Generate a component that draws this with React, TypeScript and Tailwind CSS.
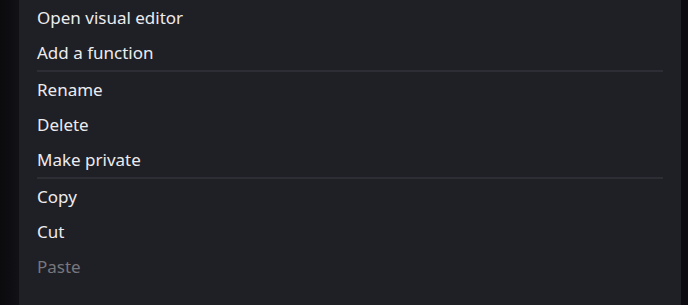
const groups = [
  ['Open visual editor', 'Add a function'],
  ['Rename', 'Delete', 'Make private'],
  ['Copy', 'Cut', 'Paste'],
];

export default function App() {
  return (
    <div className="flex h-[305px] w-[688px] overflow-hidden bg-[#0c0c10]" style={{ fontFamily: '"Noto Sans", sans-serif' }}>
      <div className="w-[19px] shrink-0 bg-gradient-to-r from-[#0b0b0e] to-[#111116]" />
      <div className="flex w-[662px] flex-col bg-[#1f1f26] pl-[18px] pr-[18px]">
        {groups.map((group, gi) => (
          <div key={gi}>
            {gi > 0 && <div className="h-[2px] bg-[#2d2d35]" />}
            {group.map((label) => (
              <div
                key={label}
                className={`flex h-[35px] items-center text-[17px] ${label === 'Paste' ? 'text-[#77777d]' : 'text-[#ececef]'}`}
              >
                {label}
              </div>
            ))}
          </div>
        ))}
      </div>
      <div className="w-[7px] shrink-0 bg-[#0c0c10]" />
    </div>
  );
}
